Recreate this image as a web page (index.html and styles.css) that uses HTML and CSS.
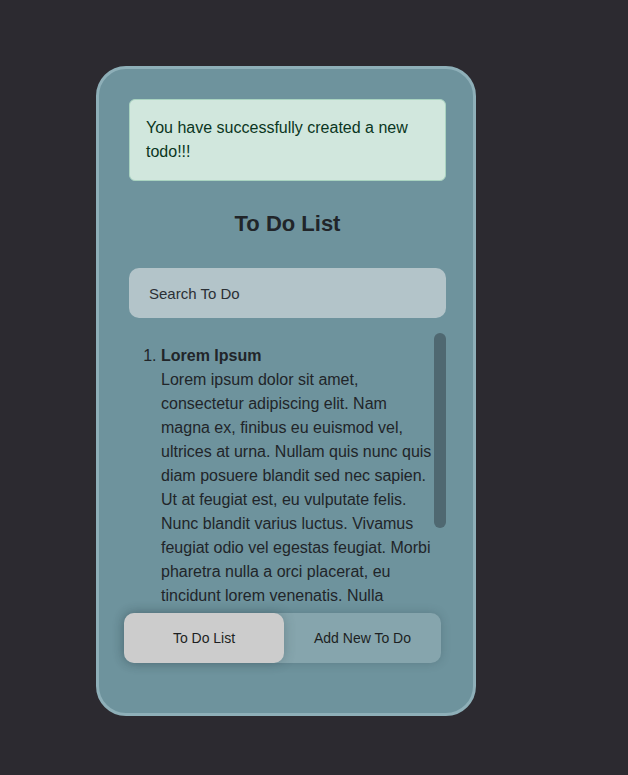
FILE: index.html
```html
<!DOCTYPE html>
<html lang="en">
<head>
<meta charset="utf-8">
<title>To Do List</title>
<link rel="stylesheet" href="styles.css">
</head>
<body>
<div class="page">
  <main class="card">
    <div class="alert">You have successfully created a new todo!!!</div>
    <h2 class="title">To Do List</h2>
    <input class="search" type="text" placeholder="Search To Do">
    <div class="list-area">
      <div class="list-wrap">
        <ol class="todos">
          <li>
            <strong class="todo-title">Lorem Ipsum</strong>
            <p class="todo-text">Lorem ipsum dolor sit amet, consectetur adipiscing elit. Nam magna ex, finibus eu euismod vel, ultrices at urna. Nullam quis nunc quis diam posuere blandit sed nec sapien. Ut at feugiat est, eu vulputate felis. Nunc blandit varius luctus. Vivamus feugiat odio vel egestas feugiat. Morbi pharetra nulla a orci placerat, eu tincidunt lorem venenatis. Nulla facilisi.</p>
          </li>
        </ol>
      </div>
      <div class="scroll-thumb"></div>
    </div>
    <nav class="tabs">
      <button class="tab active">To Do List</button>
      <button class="tab">Add New To Do</button>
    </nav>
  </main>
</div>
</body>
</html>
```
FILE: styles.css
```css
* { box-sizing: border-box; }

html, body {
  margin: 0;
  padding: 0;
  background: #2c2a30;
  font-family: "Liberation Sans", Arial, sans-serif;
  color: #212529;
}

.page {
  padding: 66px 0 0 96px;
}

.card {
  width: 380px;
  height: 650px;
  background: #6e939d;
  border: 3px solid #8eafb8;
  border-radius: 30px;
  padding: 30px 27px 50px 30px;
  display: flex;
  flex-direction: column;
}

.alert {
  background: #d1e7dd;
  border: 1px solid #a9d3c0;
  color: #0a3622;
  border-radius: 6px;
  padding: 16px;
  font-size: 16px;
  line-height: 24px;
}

.title {
  margin: 30px 0 31px;
  font-size: 22px;
  line-height: 26px;
  font-weight: 700;
  text-align: center;
  color: #212529;
}

.search {
  display: block;
  width: 100%;
  height: 50px;
  border: none;
  outline: none;
  border-radius: 10px;
  background: #b3c4c9;
  padding: 0 20px;
  font-family: "Liberation Sans", Arial, sans-serif;
  font-size: 15px;
  color: #212529;
}

.search::placeholder {
  color: #2b3035;
  opacity: 1;
}

.list-area {
  position: relative;
  margin-top: 15px;
  height: 280px;
  flex: none;
}

.list-wrap {
  height: 100%;
  overflow: hidden;
  padding-right: 12px;
}

.scroll-thumb {
  position: absolute;
  top: 0;
  right: 0;
  width: 12px;
  height: 195px;
  background: #4f6871;
  border-radius: 6px;
}

.todos {
  margin: 0;
  padding: 11px 0 0 32px;
  font-size: 16px;
  line-height: 24px;
  color: #212529;
}

.todo-title {
  display: block;
  font-weight: 700;
}

.todo-text {
  margin: 0;
}

.tabs {
  display: flex;
  width: 317px;
  height: 50px;
  margin-left: -5px;
  border-radius: 10px;
  background: #86a5ad;
  box-shadow: 0 0 10px rgba(40, 60, 66, 0.25);
  flex: none;
}

.tab {
  flex: 1;
  border: none;
  background: transparent;
  border-radius: 10px;
  font-family: "Liberation Sans", Arial, sans-serif;
  font-size: 14px;
  color: #1c1f22;
  cursor: pointer;
  padding: 0;
}

.tab.active {
  flex: 0 0 160px;
  background: #cccccc;
  box-shadow: 0 0 12px rgba(40, 60, 66, 0.3);
}
```
